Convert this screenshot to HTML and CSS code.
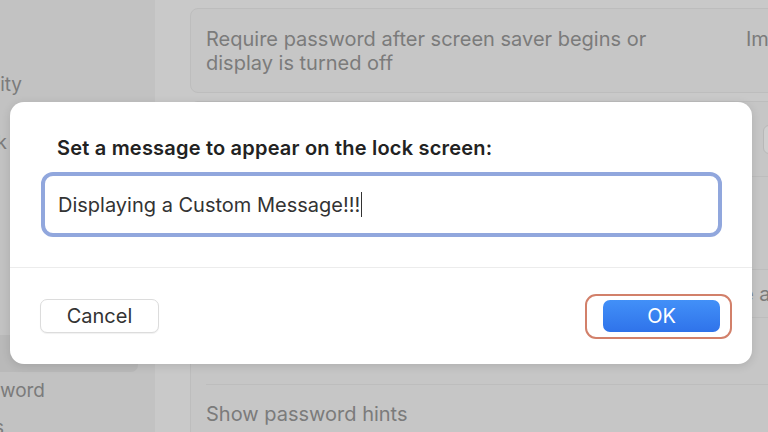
FILE: index.html
```
<!DOCTYPE html>
<html lang="en">
<head>
  <meta charset="UTF-8" />
  <meta name="viewport" content="width=device-width, initial-scale=1.0" />
  <title>Lock Screen</title>
  <link rel="stylesheet" href="styles.css">
</head>
<body>
  <div class="window">
    <!-- 側邊欄 -->
    <div class="sidebar">
      <div class="side-item first"><span>Privacy &amp; Security</span></div>
      <div class="side-item second"><span>Desktop &amp; Dock</span></div>
      <div class="side-item selected"><span>Lock Screen</span></div>
      <div class="side-item pw"><span>Touch ID &amp; Password</span></div>
      <div class="side-item last"><span>Users &amp; Groups</span></div>
    </div>

    <div class="main">
      <div class="card">
        <div class="row row-first">
          <div class="row-label">Require password after screen saver begins or display is turned off</div>
          <div class="row-value">Immediately</div>
        </div>
      </div>
      <div class="card card-second">
        <div class="row row-a">
          <div class="row-label">Start Screen Saver when inactive</div>
          <div class="popup">For 20 minutes</div>
        </div>
        <div class="row row-b">
          <div class="row-label">Turn display off when inactive</div>
        </div>
        <div class="row row-c">
          <div class="row-label">Show message when locked</div>
          <div class="row-value">e a message</div>
        </div>
        <div class="row row-d">
          <div class="row-label">Show user name and photo</div>
        </div>
        <div class="row row-e">
          <div class="row-label">Show password hints</div>
        </div>
      </div>
    </div>

    <!-- 對話框 -->
    <div class="dialog">
      <div class="dialog-body">
        <div class="dialog-title">Set a message to appear on the lock screen:</div>
        <div class="message-input">Displaying a Custom Message!!!<span class="caret"></span></div>
      </div>
      <div class="dialog-footer">
        <button class="btn btn-cancel">Cancel</button>
        <div class="highlight">
          <button class="btn btn-ok">OK</button>
        </div>
      </div>
    </div>
  </div>
</body>
</html>
```

FILE: styles.css
```
body {
  margin: 0;
  background-color: #c9c9c9;
  font-family: 'Inter', 'Liberation Sans', sans-serif;
  overflow: hidden;
}
.window {
  width: 768px;
  height: 432px;
  display: flex;
  position: relative;
  overflow: hidden;
}
.sidebar {
  width: 155px;
  flex-shrink: 0;
  background-color: #c2c2c2;
  padding-top: 70px;
  display: flex;
  flex-direction: column;
  overflow: hidden;
  color: #7b7b7b;
  font-size: 19px;
}
.side-item {
  height: 29px;
  flex-shrink: 0;
  display: flex;
  align-items: center;
  justify-content: flex-end;
  width: 22px;
  white-space: nowrap;
}
.side-item.second {
  width: 7px;
  margin-top: 29px;
}
.side-item.selected {
  width: 138px;
  height: 37px;
  margin-top: 178px;
  background-color: #b9b9b9;
  border-radius: 0 7px 7px 0;
  color: #b9b9b9;
}
.side-item.pw {
  width: 45px;
  margin-top: 4px;
}
.side-item.last {
  width: 4px;
  margin-top: 8px;
}
.main {
  flex: 1;
  padding: 8px 0 0 35px;
  display: flex;
  flex-direction: column;
  gap: 8px;
}
.card {
  width: 620px;
  background-color: #c6c6c6;
  border: 1px solid #bdbdbd;
  border-radius: 8px;
  padding: 0 15px;
}
.row {
  display: grid;
  grid-template-columns: 536px 1fr;
  align-items: center;
  color: #7b7b7b;
  font-size: 20px;
  line-height: 24px;
  white-space: nowrap;
}
.row + .row {
  border-top: 1px solid #bdbdbd;
}
.row-first {
  height: 83px;
  white-space: normal;
}
.row-first .row-label {
  width: 470px;
}
.row-first .row-value {
  padding-left: 4px;
  margin-top: -24px;
}
.row-a {
  height: 74px;
}
.popup {
  margin-left: 21px;
  height: 27px;
  border: 1px solid #b8b8b8;
  border-radius: 6px;
  background-color: #cfcfcf;
  padding: 0 10px;
  font-size: 16px;
  line-height: 27px;
}
.row-b {
  height: 92px;
}
.row-c {
  height: 47px;
}
.row-d {
  height: 66px;
}
.row-e {
  height: 58px;
}
.dialog {
  position: absolute;
  left: 10px;
  top: 102px;
  width: 742px;
  height: 262px;
  background-color: #fff;
  border-radius: 14px;
  box-shadow: 0 2px 10px rgba(0,0,0,0.12);
  display: flex;
  flex-direction: column;
  z-index: 2;
}
.dialog-body {
  padding: 34px 30px 30px 31px;
  border-bottom: 1px solid #ececec;
}
.dialog-title {
  margin-left: 16px;
  font-size: 20px;
  font-weight: 600;
  letter-spacing: 0.2px;
  line-height: 24px;
  color: #222;
}
.message-input {
  margin-top: 12px;
  height: 65px;
  box-sizing: border-box;
  border: 4px solid #91a7dd;
  border-radius: 12px;
  padding-left: 13px;
  display: flex;
  align-items: center;
  font-size: 20px;
  color: #333;
}
.caret {
  display: inline-block;
  width: 1px;
  height: 25px;
  background-color: #333;
  margin-left: 1px;
}
.dialog-footer {
  flex: 1;
  display: flex;
  justify-content: space-between;
  align-items: center;
  padding: 0 20px 0 30px;
}
.btn {
  border: none;
  font-family: inherit;
  font-size: 20px;
  cursor: pointer;
  border-radius: 7px;
}
.btn-cancel {
  width: 119px;
  height: 34px;
  background-color: #fff;
  border: 1px solid #dcdcdc;
  box-shadow: 0 1px 1px rgba(0,0,0,0.06);
  color: #333;
}
.highlight {
  border: 2px solid #d2806a;
  border-radius: 11px;
  padding: 4px 10px 5px 16px;
}
.btn-ok {
  width: 117px;
  height: 32px;
  background: linear-gradient(#4290f8, #2f73ea);
  color: #fff;
}
```
